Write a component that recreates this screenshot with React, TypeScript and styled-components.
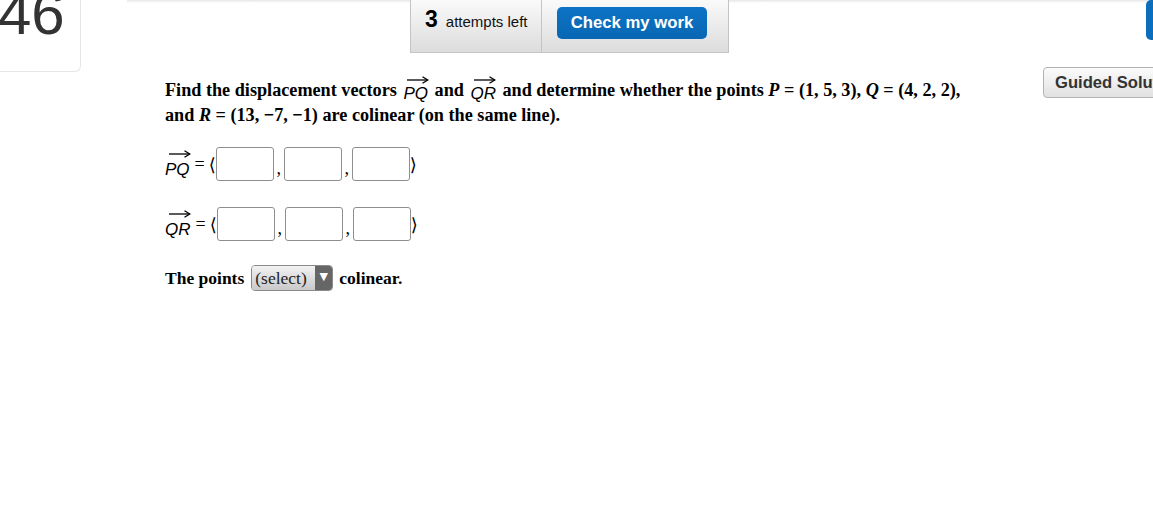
import React from "react";
import styled, { createGlobalStyle } from "styled-components";

const GlobalStyle = createGlobalStyle`
  html, body {
    margin: 0;
    padding: 0;
    background: #fff;
    overflow: hidden;
  }
  body {
    font-family: "Liberation Serif", "Times New Roman", serif;
    color: #000;
  }
`;

const Page = styled.div`
  width: 1153px;
  height: 525px;
  overflow: hidden;
`;

const TopRow = styled.div`
  display: flex;
  align-items: flex-start;
  height: 53px;
`;

const CountCard = styled.div`
  flex-shrink: 0;
  width: 80px;
  height: 71px;
  border: 1px solid #e6e6e6;
  border-top: none;
  border-left: none;
  border-radius: 0 0 6px 0;
  overflow: hidden;
  background: #fff;
`;

const CountText = styled.div`
  font-family: "Liberation Sans", Arial, sans-serif;
  font-size: 60px;
  line-height: 60px;
  margin-top: -16px;
  margin-left: -2px;
  color: #333;
`;

const HeaderStrip = styled.div`
  flex: 1;
  display: flex;
  align-items: flex-start;
  height: 53px;
  margin-left: 46px;
  background: linear-gradient(#e6e6e6, #fff 3px);
`;

const AttemptsPanel = styled.div`
  display: flex;
  margin-left: 283px;
  height: 53px;
  box-sizing: border-box;
  border: 1px solid #c4c4c4;
  border-top: none;
  background: linear-gradient(#fafafa, #dcdcdc);
  font-family: "Liberation Sans", Arial, sans-serif;
`;

const AttemptsCell = styled.div`
  width: 131px;
  box-sizing: border-box;
  padding: 6px 0 0 14px;
  border-right: 1px solid #c4c4c4;
  display: flex;
  align-items: baseline;
  gap: 8px;
  font-size: 15px;
  color: #111;
`;

const AttemptsNumber = styled.span`
  font-size: 23px;
  font-weight: bold;
  color: #000;
`;

const ButtonCell = styled.div`
  padding: 7px 21px 0 15px;
`;

const CheckButton = styled.button`
  width: 150px;
  height: 32px;
  border: none;
  border-radius: 5px;
  background: linear-gradient(#0d73c4, #0867b4);
  color: #fff;
  font-family: "Liberation Sans", Arial, sans-serif;
  font-weight: bold;
  font-size: 16.7px;
  padding: 0;
  cursor: pointer;
`;

const CornerButton = styled.div`
  margin-left: auto;
  width: 14px;
  margin-right: -7px;
  height: 40px;
  border-radius: 5px 0 0 5px;
  background: #0a6ebd;
`;

const ContentRow = styled.div`
  display: grid;
  grid-template-columns: 1043px auto;
  margin-top: 14px;
`;

const Problem = styled.div`
  padding: 11px 0 0 165px;
  font-size: 18.2px;
  font-weight: bold;
`;

const QuestionLine = styled.div`
  line-height: 25px;
  white-space: nowrap;
`;

const VecWrap = styled.span`
  position: relative;
  display: inline-block;
  font-family: "Liberation Sans", Arial, sans-serif;
  font-style: italic;
  font-weight: normal;
  font-size: 17px;
  line-height: 1;
  vertical-align: -3px;
  margin: 0 2px;
`;

const VecArrow = styled.svg<{ $top: number }>`
  position: absolute;
  left: 3px;
  top: ${(p) => p.$top}px;
`;

const MathVar = styled.i`
  font-weight: bold;
`;

const EqRow = styled.div<{ $top: number }>`
  display: flex;
  align-items: center;
  height: 34px;
  margin-top: ${(p) => p.$top}px;
  font-weight: normal;
`;

const RowLabel = styled.span`
  font-family: "Liberation Sans", Arial, sans-serif;
  position: relative;
  font-style: italic;
  font-size: 17px;
  line-height: 1;
  top: 5px;
`;

const Equals = styled.span`
  font-size: 18px;
  margin: 0 4px 0 5px;
`;

const Bracket = styled.span`
  font-family: "DejaVu Sans", sans-serif;
  font-size: 18px;
`;

const Blank = styled.input`
  width: 58px;
  height: 34px;
  box-sizing: border-box;
  border: 1px solid #8e8e8e;
  border-radius: 3px;
  background: #fff;
  margin: 0;
  padding: 0 4px;
  outline: none;
`;

const Comma = styled.span`
  width: 10px;
  text-align: center;
  font-size: 18px;
  position: relative;
  top: 4px;
`;

const SelectRow = styled.div`
  display: flex;
  align-items: center;
  margin-top: 24px;
  line-height: 25px;
  font-size: 17.5px;
`;

const SelectBox = styled.span`
  display: inline-flex;
  height: 26px;
  box-sizing: border-box;
  margin: 0 6px 0 7px;
  border: 1px solid #8a8a8a;
  border-radius: 4px;
  overflow: hidden;
  font-weight: normal;
`;

const SelectLabel = styled.span`
  width: 63px;
  box-sizing: border-box;
  padding-left: 3px;
  background: linear-gradient(#f2f2f2, #c9c9c9);
  font-size: 17.5px;
  line-height: 24px;
  color: #222;
`;

const SelectArrow = styled.span`
  width: 17px;
  background: #666;
  color: #fff;
  font-family: "DejaVu Sans", sans-serif;
  font-size: 11px;
  line-height: 22px;
  text-align: center;
`;

const GuidedButton = styled.button`
  height: 31px;
  width: 160px;
  box-sizing: border-box;
  padding: 0 0 0 11px;
  text-align: left;
  border: 1px solid #b3b3b3;
  border-radius: 4px;
  background: linear-gradient(#fbfbfb, #e1e1e1);
  color: #333;
  font-family: "Liberation Sans", Arial, sans-serif;
  font-weight: bold;
  font-size: 16.6px;
  white-space: nowrap;
`;

const Arrow = ({ top }: { top: number }) => (
  <VecArrow $top={top} width="23" height="8" viewBox="0 0 23 8">
    <path d="M1 4 H21.5" stroke="#000" strokeWidth="1.3" fill="none" />
    <path d="M16.5 0.8 L21.8 4 L16.5 7.2" stroke="#000" strokeWidth="1.3" fill="none" />
  </VecArrow>
);

const Vec = ({ children }: { children: React.ReactNode }) => (
  <VecWrap>
    <Arrow top={-9} />
    {children}
  </VecWrap>
);

const VectorRow = ({ name, top }: { name: string; top: number }) => (
  <EqRow $top={top}>
    <RowLabel>
      <Arrow top={-11} />
      {name}
    </RowLabel>
    <Equals>=</Equals>
    <Bracket>⟨</Bracket>
    <Blank />
    <Comma>,</Comma>
    <Blank />
    <Comma>,</Comma>
    <Blank />
    <Bracket>⟩</Bracket>
  </EqRow>
);

export default function App() {
  return (
    <Page>
      <GlobalStyle />
      <TopRow>
        <CountCard>
          <CountText>46</CountText>
        </CountCard>
        <HeaderStrip>
          <AttemptsPanel>
            <AttemptsCell>
              <AttemptsNumber>3</AttemptsNumber>
              <span>attempts left</span>
            </AttemptsCell>
            <ButtonCell>
              <CheckButton>Check my work</CheckButton>
            </ButtonCell>
          </AttemptsPanel>
          <CornerButton />
        </HeaderStrip>
      </TopRow>

      <ContentRow>
        <Problem>
          <QuestionLine>
            Find the displacement vectors <Vec>PQ</Vec> and <Vec>QR</Vec> and determine whether the
            points <MathVar>P</MathVar> = (1, 5, 3), <MathVar>Q</MathVar> = (4, 2, 2),
          </QuestionLine>
          <QuestionLine>
            and <MathVar>R</MathVar> = (13, −7, −1) are colinear (on the same line).
          </QuestionLine>

          <VectorRow name="PQ" top={19} />
          <VectorRow name="QR" top={26} />

          <SelectRow>
            The points
            <SelectBox>
              <SelectLabel>(select)</SelectLabel>
              <SelectArrow>▼</SelectArrow>
            </SelectBox>
            colinear.
          </SelectRow>
        </Problem>
        <div>
          <GuidedButton>Guided Solution</GuidedButton>
        </div>
      </ContentRow>
    </Page>
  );
}
